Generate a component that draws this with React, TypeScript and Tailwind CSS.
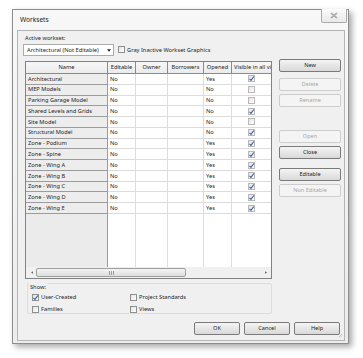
import React from "react";

const rows: { name: string; opened: string; visible: boolean }[] = [
  { name: "Architectural", opened: "Yes", visible: true },
  { name: "MEP Models", opened: "No", visible: false },
  { name: "Parking Garage Model", opened: "No", visible: false },
  { name: "Shared Levels and Grids", opened: "No", visible: true },
  { name: "Site Model", opened: "No", visible: false },
  { name: "Structural Model", opened: "No", visible: true },
  { name: "Zone - Podium", opened: "Yes", visible: true },
  { name: "Zone - Spine", opened: "Yes", visible: true },
  { name: "Zone - Wing A", opened: "Yes", visible: true },
  { name: "Zone - Wing B", opened: "Yes", visible: true },
  { name: "Zone - Wing C", opened: "Yes", visible: true },
  { name: "Zone - Wing D", opened: "Yes", visible: true },
  { name: "Zone - Wing E", opened: "Yes", visible: true },
];

function Check({ checked, light }: { checked: boolean; light?: boolean }) {
  return (
    <div
      className={
        "relative shrink-0 w-[7px] h-[7px] border bg-gradient-to-br from-[#e4e4e4] to-[#ffffff] " +
        (light ? "border-[#b8b8b8]" : "border-[#8e8f8f]")
      }
    >
      {checked && (
        <svg viewBox="0 0 7 7" className="absolute left-[-1px] top-[-1px] w-[7px] h-[7px]">
          <path d="M1.5 3.8 L3 5.3 L5.8 1.5" fill="none" stroke="#3b5fa8" strokeWidth="1.2" />
        </svg>
      )}
    </div>
  );
}

function Btn({ label, disabled, className }: { label: string; disabled?: boolean; className?: string }) {
  return (
    <div
      className={
        "flex items-center justify-center h-[13px] rounded-[2px] border text-[5.6px] whitespace-nowrap " +
        (disabled
          ? "border-[#cdcdcd] bg-[#f4f4f4] text-[#a8a8a8] "
          : "border-[#7a7a7a] bg-gradient-to-b from-[#f4f4f4] to-[#d9d9d9] text-[#222] ") +
        (className ?? "")
      }
    >
      {label}
    </div>
  );
}

const colW = ["w-[82px]", "w-[28px]", "w-[32px]", "w-[36px]", "w-[28px]", "w-[41px]"];

export default function App() {
  return (
    <div
      className="w-[363px] h-[358px] bg-white pl-[12px] pt-[9px] overflow-hidden text-[#1e1e1e]"
      style={{ fontFamily: '"Noto Sans", "Open Sans", sans-serif' }}
    >
      <div className="relative w-[337px] h-[335px] border border-[#8d8d8d] bg-gradient-to-b from-[#f8f8f8] to-[#ececec] shadow-[3px_3px_6px_rgba(0,0,0,0.35)] flex flex-col">
        {/* title bar */}
        <div className="h-[20px] flex items-center pl-[7px] text-[6.6px] text-[#1a1a1a] shrink-0">Worksets</div>
        <div className="absolute right-[1px] top-[-1px] w-[26px] h-[14px] border-l border-r border-b border-[#a9a9a9] rounded-b-[2px] bg-gradient-to-b from-[#fbfbfb] to-[#e9e9e9] flex items-center justify-center">
          <svg viewBox="0 0 8 7" className="w-[8px] h-[7px]">
            <path d="M1 1 L7 6 M7 1 L1 6" stroke="#8a8a8a" strokeWidth="1.6" />
            <path d="M1 1 L7 6 M7 1 L1 6" stroke="#e0e0e0" strokeWidth="0.5" />
          </svg>
        </div>
        {/* client */}
        <div className="ml-[4px] w-[328px] h-[311px] border border-[#b4b4b4] bg-[#f0f0f0] pl-[5px] pt-[2px] flex flex-col text-[5.7px] whitespace-nowrap">
          <div className="h-[10px] flex items-center pl-[2px]">Active workset:</div>
          <div className="mt-[1px] flex items-center h-[12px]">
            <div className="w-[91px] h-[12px] border border-[#acacac] bg-white flex items-center pl-[3px] pr-[2px] justify-between overflow-hidden">
              <span>Architectural (Not Editable)</span>
              <svg viewBox="0 0 5 3" className="w-[4px] h-[3px] shrink-0"><path d="M0 0 L5 0 L2.5 3 Z" fill="#222" /></svg>
            </div>
            <div className="ml-[4px] flex items-center gap-[2px]">
              <Check checked={false} />
              <span>Gray Inactive Workset Graphics</span>
            </div>
          </div>
          <div className="mt-[3px] flex items-start">
            {/* table */}
            <div className="mt-[2px] ml-[2px] w-[247px] h-[218px] border border-[#828282] bg-white flex flex-col overflow-hidden">
              <div className="flex h-[12px] shrink-0 bg-gradient-to-b from-[#f7f7f7] to-[#ebebeb] border-b border-[#8a8a8a]">
                {["Name", "Editable", "Owner", "Borrowers", "Opened", "Visible in all views"].map((h, i) => (
                  <div
                    key={h}
                    className={colW[i] + " shrink-0 flex items-center overflow-hidden whitespace-nowrap " + (i === 5 ? "justify-start pl-[2px]" : "justify-center border-r border-[#8a8a8a]")}
                  >
                    {h}
                  </div>
                ))}
              </div>
              <div className="flex-1 flex flex-col">
                {rows.map((r) => (
                  <div key={r.name} className="flex h-[10.77px] shrink-0">
                    <div className="w-[82px] shrink-0 bg-[#ededed] border-b border-r border-[#9c9c9c] pl-[2px] flex items-center overflow-hidden">{r.name}</div>
                    <div className="w-[28px] shrink-0 border-b border-r border-[#dcdcdc] pl-[2px] flex items-center">No</div>
                    <div className="w-[32px] shrink-0 border-b border-r border-[#dcdcdc]" />
                    <div className="w-[36px] shrink-0 border-b border-r border-[#dcdcdc]" />
                    <div className="w-[28px] shrink-0 border-b border-r border-[#dcdcdc] pl-[2px] flex items-center">{r.opened}</div>
                    <div className="w-[41px] shrink-0 border-b border-[#dcdcdc] flex items-center justify-center pr-[3px]">
                      <Check checked={r.visible} light />
                    </div>
                  </div>
                ))}
                <div className="flex flex-1">
                  <div className="w-[82px] shrink-0 bg-[#ebebeb] border-r border-[#9c9c9c]" />
                  <div className="w-[28px] shrink-0 border-r border-[#dcdcdc]" />
                  <div className="w-[32px] shrink-0 border-r border-[#dcdcdc]" />
                  <div className="w-[36px] shrink-0 border-r border-[#dcdcdc]" />
                  <div className="w-[28px] shrink-0 border-r border-[#dcdcdc]" />
                  <div className="w-[41px] shrink-0" />
                </div>
              </div>
              {/* h scrollbar */}
              <div className="h-[11px] shrink-0 bg-[#f0f0f0] flex items-center px-[1px]">
                <div className="w-[9px] h-[9px] flex items-center justify-center">
                  <svg viewBox="0 0 3 4" className="w-[2px] h-[3px]"><path d="M3 0 L0 2 L3 4 Z" fill="#606060" /></svg>
                </div>
                <div className="w-[150px] h-[9px] rounded-[2px] border border-[#9e9e9e] bg-gradient-to-b from-[#f4f4f4] to-[#dedede] flex items-center justify-center">
                  <svg viewBox="0 0 5 4" className="w-[5px] h-[4px]">
                    <path d="M0.5 0 V4 M2.5 0 V4 M4.5 0 V4" stroke="#8a8a8a" strokeWidth="0.8" />
                  </svg>
                </div>
                <div className="flex-1" />
                <div className="w-[9px] h-[9px] flex items-center justify-center">
                  <svg viewBox="0 0 3 4" className="w-[2px] h-[3px]"><path d="M0 0 L3 2 L0 4 Z" fill="#606060" /></svg>
                </div>
              </div>
            </div>
            {/* right buttons */}
            <div className="ml-[7px] w-[62px] flex flex-col">
              <Btn label="New" />
              <Btn label="Delete" disabled className="mt-[6px]" />
              <Btn label="Rename" disabled className="mt-[3px]" />
              <Btn label="Open" disabled className="mt-[23px]" />
              <Btn label="Close" className="mt-[3px]" />
              <Btn label="Editable" className="mt-[9px]" />
              <Btn label="Non Editable" disabled className="mt-[3px]" />
            </div>
          </div>
          {/* Show group */}
          <div className="mt-[4px] ml-[4px] w-[245px] h-[31px] border border-[#dddddd] rounded-[2px] relative">
            <div className="absolute left-[1px] top-[-1px] px-[1px] bg-[#f0f0f0] leading-[8px]">Show:</div>
            <div className="grid grid-cols-[98px_1fr] pl-[4px] pt-[9px] gap-y-[4px]">
              <div className="flex items-center gap-[2px] h-[8px]"><Check checked /><span>User-Created</span></div>
              <div className="flex items-center gap-[2px] h-[8px]"><Check checked={false} /><span>Project Standards</span></div>
              <div className="flex items-center gap-[2px] h-[8px]"><Check checked={false} /><span>Families</span></div>
              <div className="flex items-center gap-[2px] h-[8px]"><Check checked={false} /><span>Views</span></div>
            </div>
          </div>
          {/* bottom buttons */}
          <div className="mt-[8px] flex justify-end gap-[4px] pr-[4px]">
            <Btn label="OK" className="w-[46px]" />
            <Btn label="Cancel" className="w-[46px]" />
            <Btn label="Help" className="w-[46px]" />
          </div>
        </div>
        <svg viewBox="0 0 6 6" className="absolute right-[5px] bottom-[5px] w-[5px] h-[5px]">
          <path d="M5 1 L1 5 M5 3 L3 5" stroke="#b0b0b0" strokeWidth="0.8" />
        </svg>
      </div>
    </div>
  );
}
